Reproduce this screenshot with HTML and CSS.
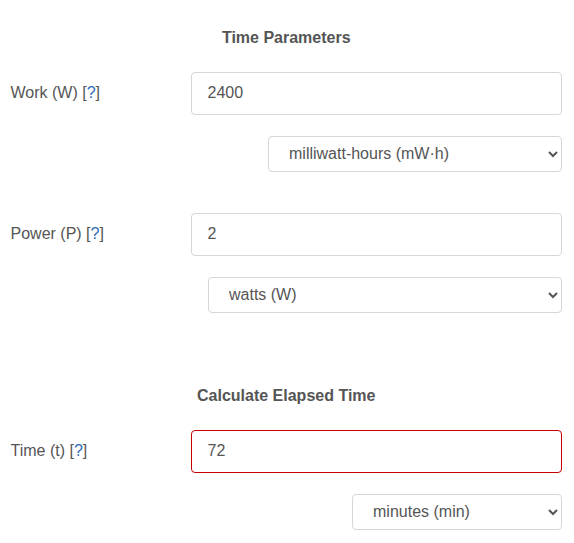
FILE: index.html
```html
<!DOCTYPE html>
<html lang="en">
<head>
<meta charset="utf-8">
<title>Time Calculator</title>
<link rel="stylesheet" href="styles.css">
</head>
<body>
<form class="calc">
  <h3 class="section-title">Time Parameters</h3>

  <div class="field">
    <label class="field-label" for="work">Work (W) <span class="hint">[<a href="#" class="hint-link">?</a>]</span></label>
    <input class="field-input" id="work" type="text" value="2400">
  </div>
  <div class="unit-row">
    <select class="unit-select unit-energy">
      <option>milliwatt-hours (mW·h)</option>
    </select>
  </div>

  <div class="field field-next">
    <label class="field-label" for="power">Power (P) <span class="hint">[<a href="#" class="hint-link">?</a>]</span></label>
    <input class="field-input" id="power" type="text" value="2">
  </div>
  <div class="unit-row">
    <select class="unit-select unit-power">
      <option>watts (W)</option>
    </select>
  </div>

  <h3 class="section-title section-result">Calculate Elapsed Time</h3>

  <div class="field">
    <label class="field-label" for="time">Time (t) <span class="hint">[<a href="#" class="hint-link">?</a>]</span></label>
    <input class="field-input field-result" id="time" type="text" value="72">
  </div>
  <div class="unit-row">
    <select class="unit-select unit-time">
      <option>minutes (min)</option>
    </select>
  </div>
</form>
</body>
</html>
```

FILE: styles.css
```css
html, body {
  margin: 0;
  padding: 0;
  background: #fff;
}

body {
  font-family: "Liberation Sans", Arial, sans-serif;
  font-size: 16px;
  color: #555;
}

.calc {
  display: flex;
  flex-direction: column;
  padding: 27px 12px 0 10.5px;
}

.section-title {
  margin: 0 0 22.5px;
  font-size: 16px;
  line-height: 22px;
  font-weight: bold;
  text-align: center;
  color: #555;
}

.section-result {
  margin-top: 72px;
  margin-bottom: 23px;
}

.field {
  display: grid;
  grid-template-columns: 180px 1fr;
  align-items: center;
}

.field-next {
  margin-top: 41px;
}

.field-label {
  line-height: 20px;
  color: #555;
}

.hint-link {
  color: #2a6ab8;
  text-decoration: none;
}

.field-input {
  box-sizing: border-box;
  width: 100%;
  height: 43px;
  margin: 0;
  padding: 0 16px;
  border: 1px solid #d6d6d6;
  border-radius: 4px;
  background: #fff;
  font-family: inherit;
  font-size: 16px;
  color: #555;
  outline: none;
}

.field-result {
  border-color: #c40000;
}

.unit-row {
  display: flex;
  justify-content: flex-end;
  margin-top: 21px;
}

.unit-select {
  box-sizing: border-box;
  height: 36px;
  margin: 0;
  padding: 0 8px 0 16px;
  border: 1px solid #d6d6d6;
  border-radius: 4px;
  background-color: #fff;
  font-family: inherit;
  font-size: 16px;
  color: #555;
}

.unit-energy {
  width: 294px;
}

.unit-power {
  width: 354px;
}

.unit-time {
  width: 210px;
}
```
